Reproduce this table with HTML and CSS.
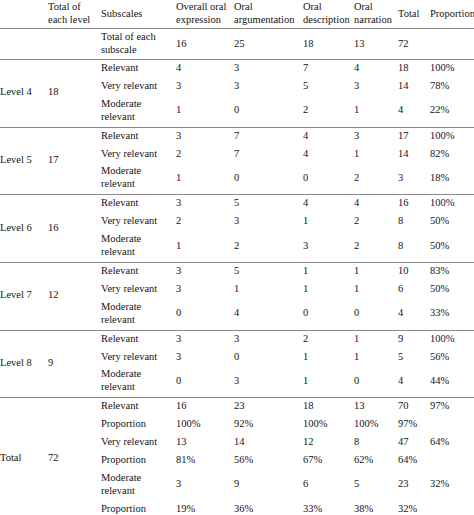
FILE: index.html
```html
<!DOCTYPE html>
<html>
<head>
<meta charset="utf-8">
<link rel="stylesheet" href="styles.css">
</head>
<body>
<table class="tbl">
<colgroup>
<col class="c1"><col class="c2"><col class="c3"><col class="c4"><col class="c5"><col class="c6"><col class="c7"><col class="c8"><col class="c9">
</colgroup>
<thead>
<tr>
<th></th><th>Total of<br>each level</th><th>Subscales</th><th>Overall oral<br>expression</th><th>Oral<br>argumentation</th><th>Oral<br>description</th><th>Oral<br>narration</th><th>Total</th><th>Proportion</th>
</tr>
</thead>
<tbody class="sub">
<tr><td></td><td></td><td>Total of each<br>subscale</td><td>16</td><td>25</td><td>18</td><td>13</td><td>72</td><td></td></tr>
</tbody>
<tbody class="blk">
<tr><td rowspan="3">Level 4</td><td rowspan="3">18</td><td>Relevant</td><td>4</td><td>3</td><td>7</td><td>4</td><td>18</td><td>100%</td></tr>
<tr><td>Very relevant</td><td>3</td><td>3</td><td>5</td><td>3</td><td>14</td><td>78%</td></tr>
<tr><td>Moderate<br>relevant</td><td>1</td><td>0</td><td>2</td><td>1</td><td>4</td><td>22%</td></tr>
</tbody>
<tbody class="blk">
<tr><td rowspan="3">Level 5</td><td rowspan="3">17</td><td>Relevant</td><td>3</td><td>7</td><td>4</td><td>3</td><td>17</td><td>100%</td></tr>
<tr><td>Very relevant</td><td>2</td><td>7</td><td>4</td><td>1</td><td>14</td><td>82%</td></tr>
<tr><td>Moderate<br>relevant</td><td>1</td><td>0</td><td>0</td><td>2</td><td>3</td><td>18%</td></tr>
</tbody>
<tbody class="blk">
<tr><td rowspan="3">Level 6</td><td rowspan="3">16</td><td>Relevant</td><td>3</td><td>5</td><td>4</td><td>4</td><td>16</td><td>100%</td></tr>
<tr><td>Very relevant</td><td>2</td><td>3</td><td>1</td><td>2</td><td>8</td><td>50%</td></tr>
<tr><td>Moderate<br>relevant</td><td>1</td><td>2</td><td>3</td><td>2</td><td>8</td><td>50%</td></tr>
</tbody>
<tbody class="blk">
<tr><td rowspan="3">Level 7</td><td rowspan="3">12</td><td>Relevant</td><td>3</td><td>5</td><td>1</td><td>1</td><td>10</td><td>83%</td></tr>
<tr><td>Very relevant</td><td>3</td><td>1</td><td>1</td><td>1</td><td>6</td><td>50%</td></tr>
<tr><td>Moderate<br>relevant</td><td>0</td><td>4</td><td>0</td><td>0</td><td>4</td><td>33%</td></tr>
</tbody>
<tbody class="blk">
<tr><td rowspan="3">Level 8</td><td rowspan="3">9</td><td>Relevant</td><td>3</td><td>3</td><td>2</td><td>1</td><td>9</td><td>100%</td></tr>
<tr><td>Very relevant</td><td>3</td><td>0</td><td>1</td><td>1</td><td>5</td><td>56%</td></tr>
<tr><td>Moderate<br>relevant</td><td>0</td><td>3</td><td>1</td><td>0</td><td>4</td><td>44%</td></tr>
</tbody>
<tbody class="blk">
<tr><td rowspan="6">Total</td><td rowspan="6">72</td><td>Relevant</td><td>16</td><td>23</td><td>18</td><td>13</td><td>70</td><td>97%</td></tr>
<tr><td>Proportion</td><td>100%</td><td>92%</td><td>100%</td><td>100%</td><td>97%</td><td></td></tr>
<tr><td>Very relevant</td><td>13</td><td>14</td><td>12</td><td>8</td><td>47</td><td>64%</td></tr>
<tr><td>Proportion</td><td>81%</td><td>56%</td><td>67%</td><td>62%</td><td>64%</td><td></td></tr>
<tr><td>Moderate<br>relevant</td><td>3</td><td>9</td><td>6</td><td>5</td><td>23</td><td>32%</td></tr>
<tr><td>Proportion</td><td>19%</td><td>36%</td><td>33%</td><td>38%</td><td>32%</td><td></td></tr>
</tbody>
</table>
</body>
</html>
```
FILE: styles.css
```css
html, body {
  margin: 0;
  padding: 0;
  overflow: hidden;
  background: #ffffff;
}
.tbl {
  border-collapse: collapse;
  table-layout: fixed;
  width: 474px;
  font-family: "Liberation Serif", "Times New Roman", serif;
  font-size: 10.5px;
  line-height: 13px;
  color: #141414;
}
.c1 { width: 48px; }
.c2 { width: 53px; }
.c3 { width: 75px; }
.c4 { width: 58px; }
.c5 { width: 69px; }
.c6 { width: 51px; }
.c7 { width: 44px; }
.c8 { width: 32px; }
.c9 { width: 44px; }
.tbl th, .tbl td {
  padding: 0;
  text-align: left;
  vertical-align: middle;
  white-space: nowrap;
  font-weight: normal;
  overflow: visible;
}
.tbl th {
  padding: 0 0 2px;
  border-bottom: 1px solid #8a8a8a;
}
.sub td {
  padding: 1px 0 3px;
}
.blk td {
  padding: 1px 0 3.9px;
}
.blk tr:first-child td {
  border-top: 1px solid #8a8a8a;
}
```
